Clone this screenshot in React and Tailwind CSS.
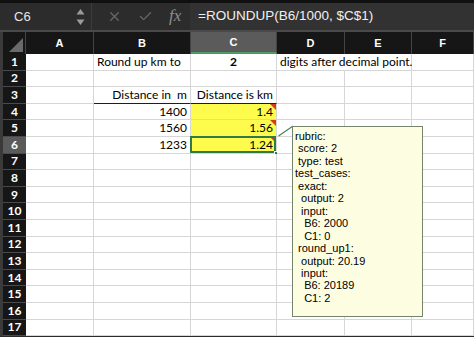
import { X, Check } from 'lucide-react';

const colW = ['w-[68px]', 'w-[97px]', 'w-[86px]', 'w-[68px]', 'w-[67px]', 'w-[62px]'];
const cols = ['A', 'B', 'C', 'D', 'E', 'F'];

const comment = [
  'rubric:',
  ' score: 2',
  ' type: test',
  'test_cases:',
  ' exact:',
  '  output: 2',
  '  input:',
  '   B6: 2000',
  '   C1: 0',
  ' round_up1:',
  '  output: 20.19',
  '  input:',
  '   B6: 20189',
  '   C1: 2',
];

function Tri() {
  return <span className="absolute top-0 right-0 w-0 h-0 border-t-[6px] border-l-[6px] border-t-[#d8391c] border-l-transparent" />;
}

function Cell({ w, children, align = 'left', bold, yellow, under, note, selected }) {
  return (
    <div
      className={`${w} shrink-0 h-full relative flex items-center px-[3px] whitespace-pre border-r border-[#d6d6d6] ${
        under ? 'border-b border-b-[#1e1e1e]' : 'border-b border-b-[#d6d6d6]'
      } ${yellow ? 'bg-[#fdfb4c]' : 'bg-white'} ${
        align === 'right' ? 'justify-end' : align === 'center' ? 'justify-center' : 'justify-start'
      } ${bold ? 'font-bold' : ''}`}
    >
      {children}
      {note && <Tri />}
      {selected && (
        <>
          <span className="absolute -left-[1px] -top-[1px] -right-[0px] -bottom-[0px] border-2 border-[#317a48]" />
          <span className="absolute -right-[3px] -bottom-[3px] w-[5px] h-[5px] bg-[#317a48] border border-white" />
        </>
      )}
    </div>
  );
}

function RowHead({ n, active }) {
  return (
    <div className="w-[26px] shrink-0 h-full flex">
      <div className="w-[3px] bg-[#3a3a3a]" />
      <div
        className={`w-[23px] h-full flex items-center justify-center text-[12px] font-bold text-white border-b border-[#4a4a4a] ${
          active ? 'bg-[#5b5b5b]' : 'bg-[#161616]'
        }`}
      >
        {n}
      </div>
    </div>
  );
}

function Row({ n, active, children }) {
  return (
    <div className="flex h-[16.6px]">
      <RowHead n={n} active={active} />
      {children}
    </div>
  );
}

function Empty({ from = 0 }) {
  return colW.slice(from).map((w, i) => <Cell key={i} w={w} />);
}

export default function App() {
  return (
    <div className="w-[474px] h-[337px] overflow-hidden bg-[#2b2b2b] relative text-[12px] text-black" style={{ fontFamily: 'Lato, "Liberation Sans", sans-serif' }}>
      <div className="h-[3px] bg-[#101010]" />
      <div className="h-[27px] flex items-stretch bg-[#2c2c2c]" style={{ fontFamily: '"Liberation Sans", Arial, sans-serif' }}>
        <div className="w-[92px] flex items-center justify-between pl-[14px] pr-[6px] border-r border-[#3c3c3c]">
          <span className="text-[13px] text-[#e6e6e6]">C6</span>
          <svg width="9" height="18" viewBox="0 0 9 18">
            <path d="M4.5 1 L8.5 6.5 L0.5 6.5 Z" fill="#9a9a9a" />
            <path d="M4.5 17 L8.5 11.5 L0.5 11.5 Z" fill="#9a9a9a" />
          </svg>
        </div>
        <div className="w-[98px] flex items-center pl-[15px] gap-[16px]">
          <X size={15} strokeWidth={2.2} color="#666666" />
          <Check size={15} strokeWidth={2.2} color="#666666" />
          <span className="text-[17px] italic text-[#8c8c8c] -mt-[2px]" style={{ fontFamily: '"Liberation Serif", serif' }}>fx</span>
        </div>
        <div className="flex-1 flex items-center pl-[8px] bg-[#323232] text-[13.5px] text-[#f0f0f0]">
          =ROUNDUP(B6/1000, $C$1)
        </div>
      </div>
      <div className="h-[2px] bg-[#4a4a4a]" />
      <div className="flex h-[22px] bg-[#161616]" style={{ fontFamily: '"Liberation Sans", Arial, sans-serif' }}>
        <div className="w-[26px] shrink-0 flex">
          <div className="w-[3px] bg-[#3a3a3a]" />
          <div className="w-[23px] relative border-r border-[#444]">
            <svg className="absolute right-[2px] bottom-[2px]" width="14" height="14" viewBox="0 0 14 14">
              <path d="M14 0 L14 14 L0 14 Z" fill="#6a6a6a" />
            </svg>
          </div>
        </div>
        {cols.map((c, i) => (
          <div
            key={c}
            className={`${colW[i]} shrink-0 flex items-center justify-center text-[11px] font-bold text-white border-r border-[#444] ${
              c === 'C' ? 'bg-[#5b5b5b] border-b-2 border-b-[#4f9a63]' : ''
            }`}
          >
            {c}
          </div>
        ))}
      </div>
      <div className="relative">
        <Row n={1}>
          <Cell w={colW[0]} />
          <Cell w={colW[1]}>Round up km to</Cell>
          <Cell w={colW[2]} align="center" bold>2</Cell>
          <Cell w="w-[135px]">digits after decimal point.</Cell>
          <Cell w={colW[5]} />
        </Row>
        <Row n={2}><Empty /></Row>
        <Row n={3}>
          <Cell w={colW[0]} />
          <Cell w={colW[1]} align="right" under>Distance in  m</Cell>
          <Cell w={colW[2]} align="right" under>Distance is km</Cell>
          <Empty from={3} />
        </Row>
        <Row n={4}>
          <Cell w={colW[0]} />
          <Cell w={colW[1]} align="right">1400</Cell>
          <Cell w={colW[2]} align="right" yellow note>1.4</Cell>
          <Empty from={3} />
        </Row>
        <Row n={5}>
          <Cell w={colW[0]} />
          <Cell w={colW[1]} align="right">1560</Cell>
          <Cell w={colW[2]} align="right" yellow note>1.56</Cell>
          <Empty from={3} />
        </Row>
        <Row n={6} active>
          <Cell w={colW[0]} />
          <Cell w={colW[1]} align="right">1233</Cell>
          <Cell w={colW[2]} align="right" yellow note selected>1.24</Cell>
          <Empty from={3} />
        </Row>
        {[7, 8, 9, 10, 11, 12, 13, 14, 15, 16, 17].map((n) => (
          <Row key={n} n={n}><Empty /></Row>
        ))}

        <svg className="absolute left-[277px] top-[71px]" width="18" height="12" viewBox="0 0 18 12">
          <line x1="1.5" y1="11" x2="16" y2="1" stroke="#4f7f57" strokeWidth="1.2" />
        </svg>
        <div
          className="absolute left-[292px] top-[72px] w-[131px] h-[191px] bg-[#fdfde2] border-[1.5px] border-[#75846a] pl-[2px] pt-[3px] text-[11px] leading-[12.45px] text-black whitespace-pre"
          style={{ fontFamily: '"Liberation Sans", Tahoma, sans-serif' }}
        >
          {comment.map((l, i) => (
            <div key={i}>{l}</div>
          ))}
        </div>
      </div>
    </div>
  );
}
